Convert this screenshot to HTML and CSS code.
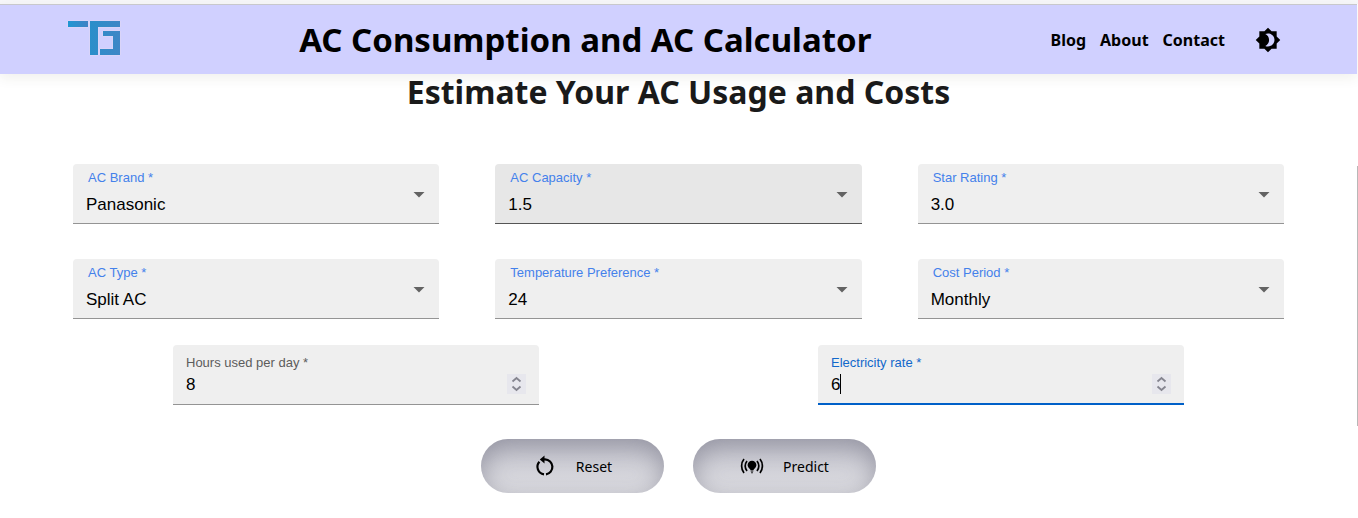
FILE: index.html
```html
<!DOCTYPE html>
<html lang="en">
<head>
<meta charset="utf-8">
<meta name="viewport" content="width=device-width, initial-scale=1">
<title>AC Consumption and AC Calculator</title>
<link rel="stylesheet" href="styles.css">
</head>
<body>
<div class="page">
  <header class="topbar">
    <a class="logo" href="#" aria-label="Home">
      <svg width="52" height="36" viewBox="0 0 52 36" aria-hidden="true">
        <defs><linearGradient id="brand" gradientUnits="userSpaceOnUse" x1="22" y1="0" x2="52" y2="0"><stop offset="0" stop-color="#2a8fca"/><stop offset="1" stop-color="#3f86c6"/></linearGradient>
        <linearGradient id="bar" gradientUnits="userSpaceOnUse" x1="0" y1="0" x2="20" y2="0"><stop offset="0" stop-color="#1f96d3"/><stop offset="1" stop-color="#4182c4"/></linearGradient></defs>
        <path fill="none" stroke="#e2d8f2" stroke-width="1" d="M0 1H20V7H0ZM22 1H52V7H30V35H22ZM35 11H52V35H32V29H45V16H35Z"/>
        <path fill="url(#bar)" d="M0 1H20V7H0Z"/>
        <path fill="url(#brand)" d="M22 1H52V7H30V35H22ZM35 11H52V35H32V29H45V16H35Z"/>
      </svg>
    </a>
    <h1 class="title">AC Consumption and AC Calculator</h1>
    <nav class="nav">
      <a href="#">Blog</a>
      <a href="#">About</a>
      <a href="#">Contact</a>
      <button class="theme" type="button" aria-label="Toggle dark mode">
        <svg width="26" height="26" viewBox="0 0 24 24" aria-hidden="true"><path d="M20 8.690V4h-4.690L12 .69 8.690 4H4v4.690L.69 12 4 15.310V20h4.690L12 23.310 15.310 20H20v-4.690L23.310 12 20 8.690zM12 18c-.89 0-1.740-.2-2.500-.55C11.560 16.500 13 14.420 13 12s-1.440-4.500-3.500-5.450C10.260 6.200 11.110 6 12 6c3.310 0 6 2.690 6 6s-2.690 6-6 6z"/></svg>
      </button>
    </nav>
  </header>
  <main class="content">
    <h2 class="heading">Estimate Your AC Usage and Costs</h2>
    <form class="form">
      <div class="choices">
        <div class="field">
          <label for="brand-select">AC Brand *</label>
          <select id="brand-select"><option>Panasonic</option></select>
          <svg class="arrow" width="12" height="6" viewBox="0 0 12 6" aria-hidden="true"><path d="M.5 0H11.500L6 5.500Z"/></svg>
        </div>
        <div class="field hovered">
          <label for="capacity">AC Capacity *</label>
          <select id="capacity"><option>1.5</option></select>
          <svg class="arrow" width="12" height="6" viewBox="0 0 12 6" aria-hidden="true"><path d="M.5 0H11.500L6 5.500Z"/></svg>
        </div>
        <div class="field">
          <label for="star">Star Rating *</label>
          <select id="star"><option>3.0</option></select>
          <svg class="arrow" width="12" height="6" viewBox="0 0 12 6" aria-hidden="true"><path d="M.5 0H11.500L6 5.500Z"/></svg>
        </div>
        <div class="field">
          <label for="type">AC Type *</label>
          <select id="type"><option>Split AC</option></select>
          <svg class="arrow" width="12" height="6" viewBox="0 0 12 6" aria-hidden="true"><path d="M.5 0H11.500L6 5.500Z"/></svg>
        </div>
        <div class="field">
          <label for="temperature">Temperature Preference *</label>
          <select id="temperature"><option>24</option></select>
          <svg class="arrow" width="12" height="6" viewBox="0 0 12 6" aria-hidden="true"><path d="M.5 0H11.500L6 5.500Z"/></svg>
        </div>
        <div class="field">
          <label for="period">Cost Period *</label>
          <select id="period"><option>Monthly</option></select>
          <svg class="arrow" width="12" height="6" viewBox="0 0 12 6" aria-hidden="true"><path d="M.5 0H11.500L6 5.500Z"/></svg>
        </div>
      </div>
      <div class="numbers">
        <div class="number">
          <label for="hours">Hours used per day *</label>
          <div class="entry">
            <input id="hours" type="number" value="8">
            <svg class="stepper" width="19" height="20" viewBox="0 0 19 20" aria-hidden="true"><path d="M5.500 7.500 9.500 4 13.500 7.500M5.500 12.500 9.500 16 13.500 12.500"/></svg>
          </div>
        </div>
        <div class="number active">
          <label for="rate">Electricity rate *</label>
          <div class="entry">
            <input id="rate" type="number" value="6">
            <span class="caret"></span>
            <svg class="stepper" width="19" height="20" viewBox="0 0 19 20" aria-hidden="true"><path d="M5.500 7.500 9.500 4 13.500 7.500M5.500 12.500 9.500 16 13.500 12.500"/></svg>
          </div>
        </div>
      </div>
      <div class="actions">
        <button class="pill" type="reset">
          <svg width="24" height="24" viewBox="0 0 24 24" aria-hidden="true"><path fill="none" stroke="#000" stroke-width="2.200" d="M11 20.400A7.600 7.600 0 0 1 6.400 7.800M13 20.400A7.600 7.600 0 0 0 12 5.300H9"/><path d="M11.500 1.500V9.500L6.800 5.500Z"/></svg>
          <span>Reset</span>
        </button>
        <button class="pill" type="button">
          <svg width="24" height="24" viewBox="0 0 24 24" aria-hidden="true"><path d="M12 6.700a4.400 4.400 0 0 0-4.400 4.400c0 1.600.9 2.700 2 3.600.6.500.9.900.9 1.500h3c0-.6.300-1 .9-1.500 1.100-.9 2-2 2-3.600a4.400 4.400 0 0 0-4.400-4.400ZM10.700 16.800h2.600v.8h-2.600ZM11.200 18.300h1.600v1h-1.600Z"/><path fill="none" stroke="#000" stroke-width="1.700" d="M4 5C.8 9 .8 15 4 19M7 7C4.800 10 4.800 14 7 17M20 5C23.200 9 23.200 15 20 19M17 7C19.200 10 19.200 14 17 17"/></svg>
          <span>Predict</span>
        </button>
      </div>
    </form>
  </main>
  <div class="scroll-thumb"></div>
</div>
</body>
</html>
```
FILE: styles.css
```css
* { box-sizing: border-box; }

body {
  margin: 0;
  background: #fff;
  color: #000;
  font-family: "Noto Sans", "Open Sans", sans-serif;
}

.page {
  position: relative;
  min-height: 100vh;
  border-top: 4px solid #f7f7f9;
}

.topbar {
  display: flex;
  align-items: center;
  justify-content: space-between;
  height: 70px;
  margin-right: 1px;
  padding: 0 76px 0 68px;
  border-top: 1px solid #c8c8cc;
  background: #d0d0ff;
  box-shadow: 0 4px 12px rgba(60, 60, 30, 0.08);
}

.logo { display: block; height: 40px; }
.logo svg { display: block; overflow: visible; }

.title {
  margin: 0;
  font-size: 33px;
  line-height: 40px;
  font-weight: 700;
}

.nav {
  display: flex;
  align-items: center;
  gap: 14px;
  font-size: 16px;
  font-weight: 700;
}

.nav a { color: #000; text-decoration: none; }

.theme {
  margin-left: 16px;
  padding: 0;
  border: 0;
  background: none;
}

.theme svg { display: block; }

.content { padding: 0 74px 24px 73px; }

.heading {
  position: relative;
  margin: 0 0 54px;
  color: #1a1a1a;
  font-size: 32px;
  line-height: 36px;
  text-align: center;
}

.choices {
  display: grid;
  grid-template-columns: repeat(3, 1fr);
  gap: 35px 56px;
}

.field,
.number {
  height: 60px;
  border-bottom: 1px solid #949494;
  border-radius: 4px 4px 0 0;
  background: #efefef;
  font-family: "Liberation Sans", Arial, sans-serif;
}

.field { position: relative; }

.field label {
  position: absolute;
  top: 6px;
  left: 15px;
  color: #4481eb;
  font-size: 13px;
  line-height: 16px;
  pointer-events: none;
}

.field select {
  width: 100%;
  height: 59px;
  padding: 22px 40px 0 13px;
  border: 0;
  background: none;
  color: #000;
  font-family: inherit;
  font-size: 17px;
  appearance: none;
}

.arrow {
  position: absolute;
  top: 28px;
  right: 14px;
  fill: #636363;
  pointer-events: none;
}

.hovered { border-bottom-color: #555; background: #e7e7e7; }

.numbers {
  display: flex;
  justify-content: space-between;
  gap: 24px;
  margin-top: 26px;
  padding: 0 100px;
}

.number {
  flex: 0 1 366px;
  padding: 9px 13px 0;
  color: #5c5c5c;
}

.number label {
  display: block;
  font-size: 13px;
  line-height: 18px;
}

.entry {
  position: relative;
  display: flex;
  align-items: center;
  height: 24px;
}

.entry input {
  flex: 1;
  min-width: 0;
  padding: 2px 0 0;
  border: 0;
  outline: 0;
  background: none;
  color: #000;
  font: 17px "Liberation Sans", Arial, sans-serif;
  appearance: textfield;
}

.entry input::-webkit-inner-spin-button { display: none; }

.stepper {
  background: #e7e7ed;
  fill: none;
  stroke: #85858f;
  stroke-width: 1.8;
}

.active { border-bottom: 2px solid #0060c8; color: #1268cb; }

.caret {
  position: absolute;
  top: 2px;
  left: 9px;
  width: 1px;
  height: 20px;
  background: #000;
}

.actions {
  display: flex;
  justify-content: center;
  gap: 29px;
  margin-top: 34px;
}

.pill {
  display: flex;
  align-items: center;
  justify-content: center;
  gap: 19px;
  width: 183px;
  height: 54px;
  padding: 0;
  border: 0;
  border-radius: 27px;
  background: linear-gradient(#c6c6cf, #dcdce1);
  box-shadow: inset 0 8px 24px rgba(75, 75, 95, 0.4);
  color: #000;
  font-family: "Noto Sans", sans-serif;
  font-size: 14px;
}

.scroll-thumb {
  position: absolute;
  top: 162px;
  right: 0;
  width: 1px;
  height: 260px;
  background: #b8b8b8;
}
```
